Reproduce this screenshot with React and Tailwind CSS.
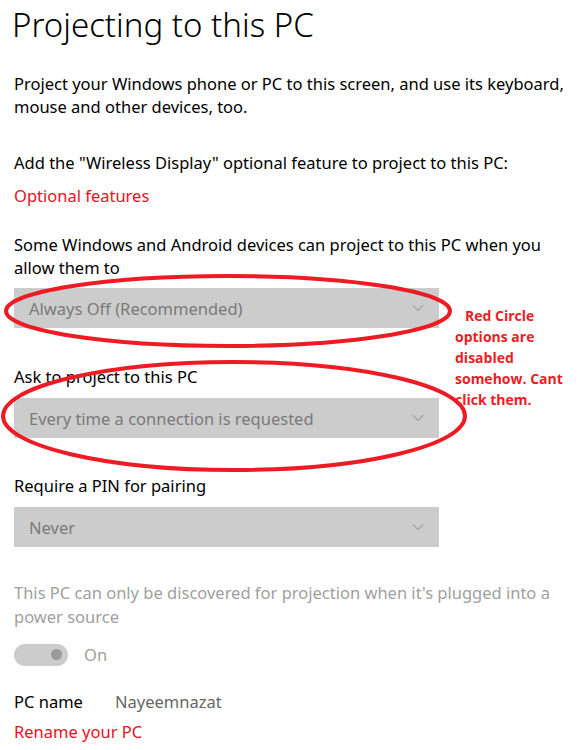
import { ChevronDown } from "lucide-react";

const Dropdown = ({ value }) => (
  <div className="flex h-[40px] w-[425px] items-center justify-between bg-[#cccccc] pl-[15px] pr-[11px] text-[#7a7a7a]">
    <span>{value}</span>
    <ChevronDown size={20} strokeWidth={1} className="text-[#7a7a7a]" />
  </div>
);

const App = () => {
  return (
    <div className="relative h-[750px] w-[579px] overflow-hidden bg-white font-['Noto_Sans','Open_Sans',sans-serif] text-[16.5px] leading-[23px] text-black">
      <div className="px-[14px]">
        <h1 className="ml-[-2px] pt-[1px] text-[33px] font-light leading-[48px]">
          Projecting to this PC
        </h1>
        <p className="mt-[23px]">
          Project your Windows phone or PC to this screen, and use its keyboard,
          <br />
          mouse and other devices, too.
        </p>
        <p className="mt-[33px]">
          Add the "Wireless Display" optional feature to project to this PC:
        </p>
        <p className="mt-[10px] text-[#e81123]">Optional features</p>
        <p className="mt-[26px]">
          Some Windows and Android devices can project to this PC when you
          <br />
          allow them to
        </p>
        <div className="mt-[9px]">
          <Dropdown value="Always Off (Recommended)" />
        </div>
        <p className="mt-[37px]">Ask to project to this PC</p>
        <div className="mt-[10px]">
          <Dropdown value="Every time a connection is requested" />
        </div>
        <p className="mt-[36px]">Require a PIN for pairing</p>
        <div className="mt-[10px]">
          <Dropdown value="Never" />
        </div>
        <p className="mt-[34px] leading-[24px] text-[#a0a0a0]">
          This PC can only be discovered for projection when it's plugged into a
          <br />
          power source
        </p>
        <div className="mt-[14px] flex items-center gap-[16px]">
          <div className="flex h-[22px] w-[54px] items-center justify-end rounded-full bg-[#cccccc] pr-[6px]">
            <div className="h-[11px] w-[11px] rounded-full bg-[#999999]" />
          </div>
          <span className="text-[#a0a0a0]">On</span>
        </div>
        <div className="mt-[24px] flex">
          <span className="w-[101px]">PC name</span>
          <span className="text-[#666666]">Nayeemnazat</span>
        </div>
        <p className="mt-[7px] text-[#e81123]">Rename your PC</p>
      </div>

      <svg
        className="pointer-events-none absolute left-0 top-0"
        width="579"
        height="750"
        fill="none"
        stroke="#ed1c24"
        strokeWidth="4"
      >
        <ellipse cx="228" cy="311" rx="222" ry="35" />
        <ellipse cx="234" cy="416" rx="231" ry="54" />
      </svg>

      <div className="absolute left-[455px] top-[305px] font-['Open_Sans',sans-serif] text-[14px] font-bold leading-[21px] text-[#ed1c24]">
        <p className="pl-[10px]">Red Circle</p>
        <p>options are</p>
        <p>disabled</p>
        <p>somehow. Cant</p>
        <p>click them.</p>
      </div>
    </div>
  );
};

export default App;
